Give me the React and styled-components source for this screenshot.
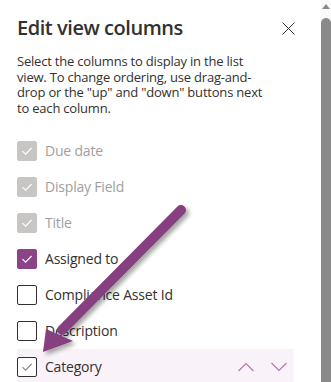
import React from "react";
import styled, { createGlobalStyle } from "styled-components";

const Global = createGlobalStyle`
  html, body { margin: 0; padding: 0; background: #ffffff; }
  body { font-family: "Open Sans", "Noto Sans", Arial, sans-serif; color: #323130; }
  * { box-sizing: border-box; }
`;

const Page = styled.div`
  position: relative;
  display: flex;
  width: 331px;
  height: 382px;
  overflow: hidden;
  background: #ffffff;
`;

const Panel = styled.div`
  flex: 1;
  display: flex;
  flex-direction: column;
  padding: 14px 27px 0 17px;
`;

const Header = styled.div`
  display: flex;
  align-items: center;
  justify-content: space-between;
  height: 30px;
`;

const Title = styled.h1`
  margin: 0;
  font-size: 20px;
  font-weight: 600;
  line-height: 28px;
  color: #323130;
  letter-spacing: -0.45px;
`;

const CloseButton = styled.button`
  border: 0;
  background: transparent;
  padding: 0;
  width: 14px;
  height: 14px;
  display: flex;
  align-items: center;
  justify-content: center;
  margin-right: -1px;
  color: #323130;
`;

const Description = styled.p`
  margin: 12px 0 0;
  font-size: 13px;
  line-height: 15.7px;
  color: #323130;
  letter-spacing: -0.2px;
`;

const Line = styled.span`
  display: block;
  white-space: nowrap;
`;

const List = styled.div`
  display: flex;
  flex-direction: column;
  margin-top: 16px;
`;

const Row = styled.div`
  display: flex;
  align-items: center;
  height: 36px;
  flex: none;
  gap: 8px;
  background: ${(p) => (p.$active ? "#f9f3f9" : "transparent")};
`;

const Box = styled.span`
  flex: none;
  width: 20px;
  height: 20px;
  border-radius: 2px;
  display: flex;
  align-items: center;
  justify-content: center;
  border: 1px solid
    ${(p) =>
      p.$state === "disabled"
        ? "#c8c6c4"
        : p.$state === "checked"
        ? "#8a4487"
        : "#323130"};
  background: ${(p) =>
    p.$state === "disabled"
      ? "#c8c6c4"
      : p.$state === "checked"
      ? "#8a4487"
      : "#ffffff"};
`;

const Label = styled.span`
  font-size: 14px;
  line-height: 20px;
  letter-spacing: -0.2px;
  color: ${(p) => (p.$disabled ? "#a19f9d" : "#323130")};
  flex: 1;
`;

const Chevrons = styled.div`
  display: flex;
  align-items: center;
  gap: 17px;
  padding-right: 7px;
`;

const ChevronButton = styled.span`
  display: flex;
  width: 16px;
  height: 10px;
  color: #b676b2;
`;

const ScrollBar = styled.div`
  flex: none;
  width: 10px;
  display: flex;
  flex-direction: column;
  align-items: center;
  background: #fafafa;
`;

const ScrollArrow = styled.div`
  margin-top: 4px;
  width: 0;
  height: 0;
  border-left: 4.5px solid transparent;
  border-right: 4.5px solid transparent;
  border-bottom: 5px solid #8a8a8a;
`;

const ScrollThumb = styled.div`
  margin-top: 9px;
  width: 10px;
  flex: 1;
  background: #8a8a8a;
  border-radius: 5px 5px 0 0;
`;

const Annotation = styled.svg`
  position: absolute;
  left: 0;
  top: 0;
  pointer-events: none;
`;

const Check = ({ color }) => (
  <svg width="14" height="14" viewBox="0 0 14 14">
    <path d="M2.5 7.2 L5.6 10.2 L11.6 4" fill="none" stroke={color} strokeWidth="1.1" />
  </svg>
);

const columns = [
  { name: "Due date", state: "disabled" },
  { name: "Display Field", state: "disabled" },
  { name: "Title", state: "disabled" },
  { name: "Assigned to", state: "checked" },
  { name: "Compliance Asset Id", state: "unchecked" },
  { name: "Description", state: "unchecked" },
  { name: "Category", state: "hover" },
];

export default function App() {
  return (
    <>
      <Global />
      <Page>
        <Panel>
          <Header>
            <Title>Edit view columns</Title>
            <CloseButton aria-label="Close">
              <svg width="13" height="13" viewBox="0 0 13 13">
                <path d="M0.5 0.5 L12.5 12.5 M12.5 0.5 L0.5 12.5" stroke="#323130" strokeWidth="1" fill="none" />
              </svg>
            </CloseButton>
          </Header>
          <Description>
            <Line>Select the columns to display in the list</Line>
            <Line>view. To change ordering, use drag-and-</Line>
            <Line>drop or the "up" and "down" buttons next</Line>
            <Line>to each column.</Line>
          </Description>
          <List>
            {columns.map((c) => (
              <Row key={c.name} $active={c.state === "hover"}>
                <Box $state={c.state}>
                  {c.state !== "unchecked" && (
                    <Check color={c.state === "hover" ? "#8a8886" : "#ffffff"} />
                  )}
                </Box>
                <Label $disabled={c.state === "disabled"}>{c.name}</Label>
                {c.state === "hover" && (
                  <Chevrons>
                    <ChevronButton>
                      <svg width="16" height="10" viewBox="0 0 16 10">
                        <path d="M0.5 9 L8 1.5 L15.5 9" fill="none" stroke="currentColor" strokeWidth="1.2" />
                      </svg>
                    </ChevronButton>
                    <ChevronButton>
                      <svg width="16" height="10" viewBox="0 0 16 10">
                        <path d="M0.5 1 L8 8.5 L15.5 1" fill="none" stroke="currentColor" strokeWidth="1.2" />
                      </svg>
                    </ChevronButton>
                  </Chevrons>
                )}
              </Row>
            ))}
          </List>
        </Panel>
        <ScrollBar>
          <ScrollArrow />
          <ScrollThumb />
        </ScrollBar>
        <Annotation width="331" height="382" viewBox="0 0 331 382">
          <defs>
            <filter id="sh" x="-20%" y="-20%" width="140%" height="140%">
              <feDropShadow dx="3" dy="3" stdDeviation="2.2" floodColor="#000" floodOpacity="0.35" />
            </filter>
          </defs>
          <g filter="url(#sh)" fill="#86417f">
            <path d="M181 210 L62 330" stroke="#86417f" strokeWidth="10" strokeLinecap="round" fill="none" />
            <path d="M43 352 L46 329 L73 341 Z" />
          </g>
        </Annotation>
      </Page>
    </>
  );
}
